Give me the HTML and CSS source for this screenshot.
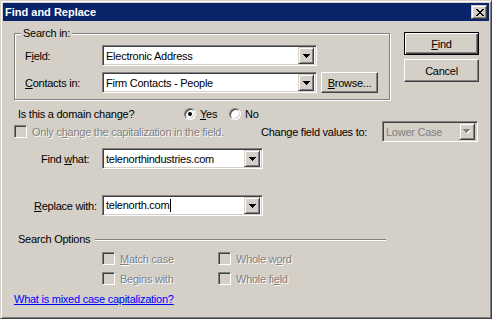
FILE: index.html
```html
<!DOCTYPE html>
<html lang="en">
<head>
    <meta charset="UTF-8">
    <title>Find and Replace</title>
    <link rel="stylesheet" href="styles.css">
</head>
<body>
    <div class="window">
        <!-- title bar -->
        <div class="titlebar">
            <span class="title">Find and Replace</span>
            <span class="close-btn">
                <svg width="8" height="7" viewBox="0 0 8 7" shape-rendering="crispEdges"><path fill="#000" d="M0 0h2v1H0zM6 0h2v1H6zM1 1h2v1H1zM5 1h2v1H5zM2 2h4v1H2zM3 3h2v1H3zM2 4h4v1H2zM1 5h2v1H1zM5 5h2v1H5zM0 6h2v1H0zM6 6h2v1H6z"/></svg>
            </span>
        </div>

        <div class="dialog">
            <div class="top-section">
                <div class="group">
                    <span class="group-title">Search in:</span>
                    <div class="group-row">
                        <span class="group-label">F<u>i</u>eld:</span>
                        <div class="combo combo-field">
                            <span class="combo-text">Electronic Address</span>
                            <span class="combo-btn"><svg width="7" height="4" viewBox="0 0 7 4" shape-rendering="crispEdges"><path fill="#000" d="M0 0h7v1H0zM1 1h5v1H1zM2 2h3v1H2zM3 3h1v1H3z"/></svg></span>
                        </div>
                    </div>
                    <div class="group-row">
                        <span class="group-label"><u>C</u>ontacts in:</span>
                        <div class="combo combo-field">
                            <span class="combo-text">Firm Contacts - People</span>
                            <span class="combo-btn"><svg width="7" height="4" viewBox="0 0 7 4" shape-rendering="crispEdges"><path fill="#000" d="M0 0h7v1H0zM1 1h5v1H1zM2 2h3v1H2zM3 3h1v1H3z"/></svg></span>
                        </div>
                        <span class="btn btn-browse"><u>B</u>rowse...</span>
                    </div>
                </div>

                <div class="buttons">
                    <span class="btn btn-main btn-default"><u>F</u>ind</span>
                    <span class="btn btn-main">Cancel</span>
                </div>
            </div>

            <div class="domain-row">
                <span class="domain-label">Is this a domain change?</span>
                <span class="option option-yes"><span class="radio checked"></span><span class="option-text"><u>Y</u>es</span></span>
                <span class="option"><span class="radio"></span><span class="option-text">No</span></span>
            </div>

            <div class="capital-row">
                <span class="option only-option"><span class="check"></span><span class="option-text disabled">Only c<u>h</u>ange the capitalization in the field.</span></span>
                <span class="change-label">Change field values to:</span>
                <div class="combo combo-case disabled-combo">
                    <span class="combo-text">Lower Case</span>
                    <span class="combo-btn"><svg width="8" height="5" viewBox="0 0 8 5" shape-rendering="crispEdges"><path fill="#fff" d="M1 1h7v1H1zM2 2h5v1H2zM3 3h3v1H3zM4 4h1v1H4z"/><path fill="#808080" d="M0 0h7v1H0zM1 1h5v1H1zM2 2h3v1H2zM3 3h1v1H3z"/></svg></span>
                </div>
            </div>

            <div class="entry-row find-row">
                <span class="entry-label find-label">Find <u>w</u>hat:</span>
                <div class="combo combo-entry">
                    <span class="combo-text">telenorthindustries.com</span>
                    <span class="combo-btn"><svg width="7" height="4" viewBox="0 0 7 4" shape-rendering="crispEdges"><path fill="#000" d="M0 0h7v1H0zM1 1h5v1H1zM2 2h3v1H2zM3 3h1v1H3z"/></svg></span>
                </div>
            </div>

            <div class="entry-row replace-row">
                <span class="entry-label"><u>R</u>eplace with:</span>
                <div class="combo combo-entry">
                    <span class="combo-text">telenorth.com<span class="caret"></span></span>
                    <span class="combo-btn"><svg width="7" height="4" viewBox="0 0 7 4" shape-rendering="crispEdges"><path fill="#000" d="M0 0h7v1H0zM1 1h5v1H1zM2 2h3v1H2zM3 3h1v1H3z"/></svg></span>
                </div>
            </div>

            <div class="options-header">
                <span>Search Options</span>
                <span class="separator"></span>
            </div>

            <div class="check-row first-check-row">
                <span class="option check-option"><span class="check"></span><span class="option-text disabled"><u>M</u>atch case</span></span>
                <span class="option check-option"><span class="check"></span><span class="option-text disabled">Whole w<u>o</u>rd</span></span>
            </div>
            <div class="check-row">
                <span class="option check-option"><span class="check"></span><span class="option-text disabled">Begins with</span></span>
                <span class="option check-option"><span class="check"></span><span class="option-text disabled">Whole fi<u>e</u>ld</span></span>
            </div>

            <div class="link-row">
                <a class="help-link" href="#">What is mixed case capitalization?</a>
            </div>
        </div>
    </div>
</body>
</html>
```

FILE: styles.css
```css
body {
    margin: 0;
    background-color: #fff;
    font-family: "Liberation Sans", Arial, sans-serif;
    font-size: 11px;
    letter-spacing: -0.25px;
    color: #000;
}
u {
    text-decoration-thickness: 1px;
    text-underline-offset: 1px;
}
.window {
    width: 492px;
    height: 319px;
    box-sizing: border-box;
    background-color: #d4d0c8;
    border: 1px solid;
    border-color: #d4d0c8 #404040 #404040 #d4d0c8;
    box-shadow: inset 1px 1px #fff, inset -1px -1px #808080;
    padding: 2px;
    display: flex;
    flex-direction: column;
}
/* title bar */
.titlebar {
    height: 18px;
    flex-shrink: 0;
    background-color: #0a246a;
    color: #fff;
    display: flex;
    align-items: center;
    justify-content: space-between;
    padding: 0 2px 0 2px;
}
.title {
    font-weight: bold;
    letter-spacing: 0;
}
.close-btn {
    width: 16px;
    height: 14px;
    box-sizing: border-box;
    border: 1px solid;
    border-color: #d4d0c8 #404040 #404040 #d4d0c8;
    box-shadow: inset 1px 1px #fff, inset -1px -1px #808080;
    background-color: #d4d0c8;
    display: flex;
    align-items: center;
    justify-content: center;
}
.close-btn svg {
    display: block;
    margin-left: 1px;
}
/* top section: group box + buttons */
.top-section {
    display: flex;
    align-items: flex-start;
}
.group {
    position: relative;
    margin: 12px 0 0 11px;
    width: 376px;
    height: 67px;
    box-sizing: border-box;
    border: 1px solid #808080;
    box-shadow: inset 1px 1px #fff, 1px 1px #fff;
    padding: 11px 0 0 10px;
}
.group-title {
    position: absolute;
    top: -7px;
    left: 6px;
    padding: 0 2px;
    line-height: 13px;
    background-color: #d4d0c8;
}
.group-row {
    display: flex;
    align-items: center;
    height: 21px;
}
.group-row + .group-row {
    margin-top: 6px;
}
.group-label {
    width: 77px;
}
.buttons {
    margin: 11px 0 0 14px;
    display: flex;
    flex-direction: column;
    gap: 4px;
}
.btn {
    box-sizing: border-box;
    border: 1px solid;
    border-color: #fff #404040 #404040 #fff;
    box-shadow: inset -1px -1px #808080;
    background-color: #d4d0c8;
    display: flex;
    align-items: center;
    justify-content: center;
}
.btn-main {
    width: 75px;
    height: 23px;
}
.btn-default {
    border-color: #000;
    box-shadow: inset 1px 1px #fff, inset -1px -1px #404040, inset -2px -2px #808080;
}
.btn-browse {
    width: 57px;
    height: 21px;
    margin-left: 4px;
}
/* combo boxes */
.combo {
    height: 21px;
    box-sizing: border-box;
    border: 1px solid;
    border-color: #808080 #fff #fff #808080;
    box-shadow: inset 1px 1px #404040, inset -1px -1px #d4d0c8;
    background-color: #fff;
    display: flex;
    align-items: center;
    padding: 0 2px 0 3px;
}
.combo-text {
    flex: 1;
    white-space: nowrap;
}
.combo-btn {
    width: 16px;
    height: 17px;
    box-sizing: border-box;
    border: 1px solid;
    border-color: #d4d0c8 #404040 #404040 #d4d0c8;
    box-shadow: inset 1px 1px #fff, inset -1px -1px #808080;
    background-color: #d4d0c8;
    display: flex;
    align-items: center;
    justify-content: center;
}
.combo-btn svg {
    display: block;
}
.combo-field {
    width: 215px;
}
.combo-case {
    width: 96px;
}
.combo-entry {
    width: 161px;
}
.disabled-combo {
    background-color: #d4d0c8;
    color: #808080;
}
.caret {
    display: inline-block;
    width: 1px;
    height: 13px;
    background-color: #000;
    vertical-align: -3px;
    margin-left: 1px;
}
/* radios and checkboxes */
.option {
    display: flex;
    align-items: center;
}
.option-text {
    margin-left: 5px;
    white-space: nowrap;
}
.radio {
    width: 12px;
    height: 12px;
    box-sizing: border-box;
    border-radius: 50%;
    border: 1px solid;
    border-color: #808080 #fff #fff #808080;
    box-shadow: inset 1px 1px #404040, inset -1px -1px #d4d0c8;
    background-color: #fff;
    display: flex;
    align-items: center;
    justify-content: center;
}
.radio.checked::after {
    content: "";
    width: 4px;
    height: 4px;
    border-radius: 50%;
    background-color: #000;
}
.option .radio + .option-text {
    margin-left: 4px;
}
.check {
    width: 13px;
    height: 13px;
    flex-shrink: 0;
    box-sizing: border-box;
    border: 1px solid;
    border-color: #808080 #fff #fff #808080;
    box-shadow: inset 1px 1px #404040, inset -1px -1px #d4d0c8;
    background-color: #d4d0c8;
}
.disabled {
    color: #808080;
    text-shadow: 1px 1px #fff;
}
/* rows */
.domain-row {
    display: flex;
    align-items: center;
    height: 14px;
    margin-top: 7px;
    padding-left: 15px;
}
.domain-label {
    width: 166px;
}
.option-yes {
    width: 45px;
}
.capital-row {
    display: flex;
    align-items: center;
    height: 21px;
    padding-left: 11px;
}
.only-option {
    width: 247px;
}
.change-label {
    width: 121px;
}
.entry-row {
    display: flex;
    align-items: center;
    height: 21px;
    padding-left: 31px;
}
.entry-label {
    width: 68px;
}
.find-label {
    width: 61px;
    padding-left: 7px;
}
.find-row {
    margin-top: 6px;
}
.replace-row {
    margin-top: 26px;
}
.options-header {
    display: flex;
    align-items: flex-start;
    height: 13px;
    line-height: 13px;
    margin-top: 17px;
    padding-left: 15px;
}
.separator {
    flex: 1;
    height: 0;
    margin: 6px 103px 0 5px;
    border-top: 1px solid #808080;
    border-bottom: 1px solid #fff;
}
.check-row {
    display: flex;
    align-items: center;
    height: 13px;
    margin-top: 7px;
    padding-left: 99px;
}
.first-check-row {
    margin-top: 6px;
}
.check-option {
    width: 116px;
}
.link-row {
    height: 13px;
    line-height: 13px;
    margin-top: 8px;
    padding-left: 11px;
}
.help-link {
    color: #0000ff;
    text-decoration: underline;
}
```
